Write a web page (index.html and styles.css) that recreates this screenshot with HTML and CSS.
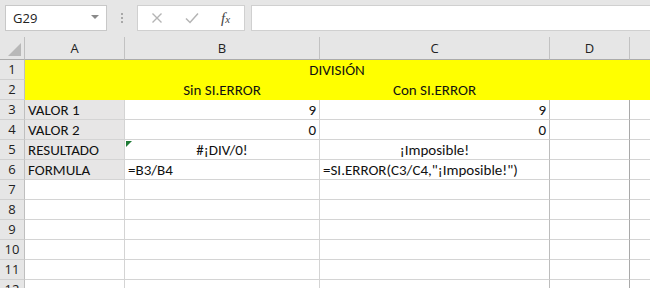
FILE: index.html
```html
<!DOCTYPE html>
<html lang="es">
<head>
<meta charset="utf-8">
<title>SI.ERROR</title>
<link rel="stylesheet" href="styles.css">
</head>
<body>
<div class="app">
  <div class="toolbar">
    <div class="namebox">
      <span class="name">G29</span>
      <svg class="caret" width="8" height="4" viewBox="0 0 8 4"><path d="M0 0h8L4 4z" fill="#8a8a8a"/></svg>
    </div>
    <div class="dots"><i></i><i></i><i></i></div>
    <div class="fxbox">
      <svg class="ico" width="12" height="12" viewBox="0 0 12 12"><path d="M1.5 1.5l9 9M10.5 1.5l-9 9" stroke="#b4b4b4" stroke-width="1.4" fill="none"/></svg>
      <svg class="ico" width="14" height="12" viewBox="0 0 14 12"><path d="M1 6.5l4 4L13 1.5" stroke="#b4b4b4" stroke-width="1.5" fill="none"/></svg>
      <span class="fx">f<sub>x</sub></span>
    </div>
    <div class="formula"></div>
  </div>
  <div class="sheet">
    <div class="corner"><span class="tri"></span></div>
    <div class="ch">A</div>
    <div class="ch">B</div>
    <div class="ch">C</div>
    <div class="ch">D</div>
    <div class="ch last"></div>

    <div class="rh">1</div>
    <div class="c y"></div>
    <div class="c y span2 center">DIVISIÓN</div>
    <div class="c y"></div>
    <div class="c y"></div>

    <div class="rh">2</div>
    <div class="c y"></div>
    <div class="c y center">Sin SI.ERROR</div>
    <div class="c y center">Con SI.ERROR</div>
    <div class="c y"></div>
    <div class="c y"></div>

    <div class="rh">3</div>
    <div class="c g">VALOR 1</div>
    <div class="c right">9</div>
    <div class="c right mid">9</div>
    <div class="c dk"></div>
    <div class="c dkl"></div>

    <div class="rh">4</div>
    <div class="c g">VALOR 2</div>
    <div class="c right">0</div>
    <div class="c right mid">0</div>
    <div class="c dk"></div>
    <div class="c dkl"></div>

    <div class="rh">5</div>
    <div class="c g">RESULTADO</div>
    <div class="c center flag">#¡DIV/0!</div>
    <div class="c center mid">¡Imposible!</div>
    <div class="c dk"></div>
    <div class="c dkl"></div>

    <div class="rh">6</div>
    <div class="c g">FORMULA</div>
    <div class="c">=B3/B4</div>
    <div class="c mid">=SI.ERROR(C3/C4,"¡Imposible!")</div>
    <div class="c dk"></div>
    <div class="c dkl"></div>

    <div class="rh">7</div><div class="c"></div><div class="c"></div><div class="c mid"></div><div class="c dk"></div><div class="c dkl"></div>
    <div class="rh">8</div><div class="c"></div><div class="c"></div><div class="c mid"></div><div class="c dk"></div><div class="c dkl"></div>
    <div class="rh">9</div><div class="c"></div><div class="c"></div><div class="c mid"></div><div class="c dk"></div><div class="c dkl"></div>
    <div class="rh">10</div><div class="c"></div><div class="c"></div><div class="c mid"></div><div class="c dk"></div><div class="c dkl"></div>
    <div class="rh">11</div><div class="c"></div><div class="c"></div><div class="c mid"></div><div class="c dk"></div><div class="c dkl"></div>
    <div class="rh">12</div><div class="c"></div><div class="c"></div><div class="c mid"></div><div class="c dk"></div><div class="c dkl"></div>
  </div>
</div>
</body>
</html>
```
FILE: styles.css
```css
* { box-sizing: border-box; }
html, body { margin: 0; padding: 0; background: #fff; }
body { width: 650px; height: 288px; overflow: hidden; }
.app { width: 650px; background: #e6e6e6; }

.toolbar {
  height: 37px;
  display: flex;
  align-items: flex-start;
  padding-top: 5px;
  font-family: "Open Sans", "Noto Sans", sans-serif;
}
.namebox {
  margin-left: 5px;
  width: 102px;
  height: 26px;
  background: #fff;
  border: 1px solid #c8c8c8;
  display: flex;
  align-items: center;
  justify-content: space-between;
  padding: 0 7px 0 7px;
}
.name { font-size: 13px; color: #222; }
.caret { margin-top: -3px; }
.dots {
  width: 30px;
  height: 26px;
  display: flex;
  flex-direction: column;
  align-items: center;
  justify-content: center;
  gap: 2px;
}
.dots i { display: block; width: 2px; height: 2px; background: #a8a8a8; }
.fxbox {
  width: 108px;
  height: 26px;
  background: #fff;
  border: 1px solid #d0d0d0;
  display: flex;
  align-items: center;
  padding-left: 13px;
}
.fxbox .ico:first-child { margin-right: 22px; }
.fxbox .ico:nth-child(2) { margin-right: 22px; }
.fx {
  font-family: "Liberation Serif", serif;
  font-style: italic;
  font-size: 15px;
  color: #444;
  line-height: 1;
}
.fx sub { font-size: 11px; vertical-align: 0; }
.formula {
  margin-left: 6px;
  flex: 1;
  height: 26px;
  background: #fff;
  border: 1px solid #d0d0d0;
  border-right: none;
}

.sheet {
  display: grid;
  grid-template-columns: 25px 100px 195px 230px 80px 20px;
  grid-template-rows: 23px repeat(12, 20px);
  font-family: Carlito, Calibri, "Lato", sans-serif;
  font-size: 15px;
  color: #111;
}
.corner {
  background: #e6e6e6;
  border-right: 1px solid #bfbfbf;
  border-bottom: 1px solid #ababab;
  position: relative;
}
.tri {
  position: absolute;
  right: 3px;
  bottom: 3px;
  width: 0;
  height: 0;
  border-left: 13px solid transparent;
  border-bottom: 13px solid #b8b8b8;
}
.ch {
  background: #e6e6e6;
  border-bottom: 1px solid #ababab;
  border-right: 1px solid #c2c2c2;
  font-family: "Open Sans", "Noto Sans", sans-serif;
  font-size: 13px;
  color: #222;
  display: flex;
  align-items: flex-end;
  justify-content: center;
  padding-bottom: 2px;
}
.ch.last { border-right: none; }
.rh {
  background: #e6e6e6;
  border-right: 1px solid #bfbfbf;
  border-bottom: 1px solid #d0d0d0;
  font-family: "Open Sans", "Noto Sans", sans-serif;
  font-size: 13px;
  color: #222;
  display: flex;
  align-items: flex-end;
  justify-content: center;
  padding-bottom: 1px;
  line-height: 18px;
}
.c {
  background: #fff;
  border-right: 1px solid #d4d4d4;
  border-bottom: 1px solid #d4d4d4;
  display: flex;
  align-items: flex-end;
  padding: 0 3px 0 3px;
  line-height: 18px;
  white-space: nowrap;
  position: relative;
}
.c.y { background: #ffff00; border-color: #ffff00; }
.c.g { background: #e7e6e6; }
.c.right { justify-content: flex-end; }
.c.center { justify-content: center; }
.c.span2 { grid-column: span 2; }
.c.mid { border-right-color: #bdbdbd; }
.c.dk { border-right-color: #a9a9a9; }
.c.dkl { border-right: none; }
.flag::before {
  content: "";
  position: absolute;
  left: 1px;
  top: 1px;
  width: 0;
  height: 0;
  border-top: 6px solid #1e7a35;
  border-right: 6px solid transparent;
}
```
